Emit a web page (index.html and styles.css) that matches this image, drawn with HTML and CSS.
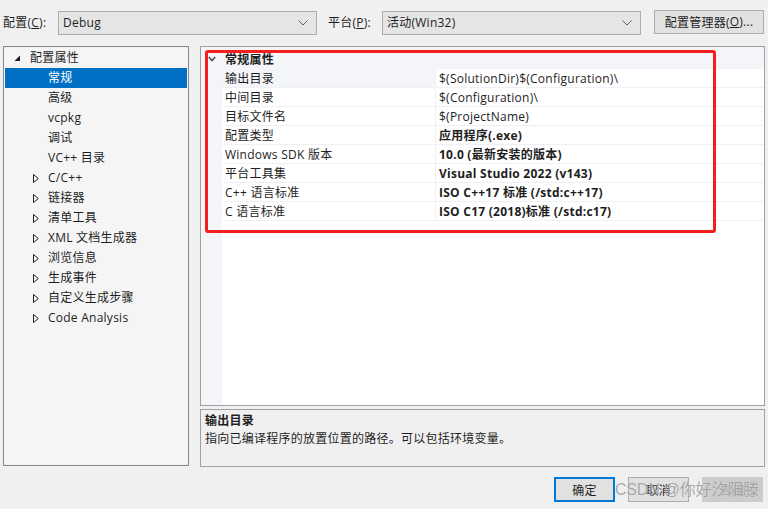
FILE: index.html
```html
<!DOCTYPE html>
<html lang="zh-CN">
<head>
<meta charset="utf-8">
<title>属性页</title>
<link rel="stylesheet" href="styles.css">
</head>
<body>
<div class="dialog">
  <div class="topbar">
    <span class="lbl lbl-config">配置(<u>C</u>):</span>
    <div class="combo combo-config"><span>Debug</span><svg class="caret" width="10" height="6" viewBox="0 0 10 6"><polyline points="0.5,0.5 5,5 9.5,0.5" fill="none" stroke="#606060" stroke-width="1"/></svg></div>
    <span class="lbl lbl-plat">平台(<u>P</u>):</span>
    <div class="combo combo-plat"><span>活动(Win32)</span><svg class="caret" width="10" height="6" viewBox="0 0 10 6"><polyline points="0.5,0.5 5,5 9.5,0.5" fill="none" stroke="#606060" stroke-width="1"/></svg></div>
    <div class="btn btn-mgr">配置管理器(<u>O</u>)...</div>
  </div>

  <div class="main">
    <div class="tree">
      <div class="trow lvl0"><svg class="tri" width="7" height="7" viewBox="0 0 7 7"><polygon points="6,0.5 6,6 0.5,6" fill="#1e1e1e"/></svg><span>配置属性</span></div>
      <div class="trow lvl1 sel"><span>常规</span></div>
      <div class="trow lvl1"><span>高级</span></div>
      <div class="trow lvl1"><span>vcpkg</span></div>
      <div class="trow lvl1"><span>调试</span></div>
      <div class="trow lvl1"><span>VC++ 目录</span></div>
      <div class="trow lvl1 col"><svg class="tri2" width="6" height="9" viewBox="0 0 6 9"><polygon points="0.5,0.5 5.3,4.5 0.5,8.5" fill="none" stroke="#1e1e1e" stroke-width="1"/></svg><span>C/C++</span></div>
      <div class="trow lvl1 col"><svg class="tri2" width="6" height="9" viewBox="0 0 6 9"><polygon points="0.5,0.5 5.3,4.5 0.5,8.5" fill="none" stroke="#1e1e1e" stroke-width="1"/></svg><span>链接器</span></div>
      <div class="trow lvl1 col"><svg class="tri2" width="6" height="9" viewBox="0 0 6 9"><polygon points="0.5,0.5 5.3,4.5 0.5,8.5" fill="none" stroke="#1e1e1e" stroke-width="1"/></svg><span>清单工具</span></div>
      <div class="trow lvl1 col"><svg class="tri2" width="6" height="9" viewBox="0 0 6 9"><polygon points="0.5,0.5 5.3,4.5 0.5,8.5" fill="none" stroke="#1e1e1e" stroke-width="1"/></svg><span>XML 文档生成器</span></div>
      <div class="trow lvl1 col"><svg class="tri2" width="6" height="9" viewBox="0 0 6 9"><polygon points="0.5,0.5 5.3,4.5 0.5,8.5" fill="none" stroke="#1e1e1e" stroke-width="1"/></svg><span>浏览信息</span></div>
      <div class="trow lvl1 col"><svg class="tri2" width="6" height="9" viewBox="0 0 6 9"><polygon points="0.5,0.5 5.3,4.5 0.5,8.5" fill="none" stroke="#1e1e1e" stroke-width="1"/></svg><span>生成事件</span></div>
      <div class="trow lvl1 col"><svg class="tri2" width="6" height="9" viewBox="0 0 6 9"><polygon points="0.5,0.5 5.3,4.5 0.5,8.5" fill="none" stroke="#1e1e1e" stroke-width="1"/></svg><span>自定义生成步骤</span></div>
      <div class="trow lvl1 col"><svg class="tri2" width="6" height="9" viewBox="0 0 6 9"><polygon points="0.5,0.5 5.3,4.5 0.5,8.5" fill="none" stroke="#1e1e1e" stroke-width="1"/></svg><span>Code Analysis</span></div>
    </div>

    <div class="right">
      <div class="grid">
        <div class="cat">
          <div class="gut"><svg width="8" height="6" viewBox="0 0 8 6"><polyline points="0.8,1 4,4.5 7.2,1" fill="none" stroke="#505050" stroke-width="1.6"/></svg></div>
          <div class="catname">常规属性</div>
        </div>
        <div class="prow cur"><div class="gut"></div><div class="pn">输出目录</div><div class="pv">$(SolutionDir)$(Configuration)\</div></div>
        <div class="prow"><div class="gut"></div><div class="pn">中间目录</div><div class="pv">$(Configuration)\</div></div>
        <div class="prow"><div class="gut"></div><div class="pn">目标文件名</div><div class="pv">$(ProjectName)</div></div>
        <div class="prow"><div class="gut"></div><div class="pn">配置类型</div><div class="pv b">应用程序(.exe)</div></div>
        <div class="prow"><div class="gut"></div><div class="pn">Windows SDK 版本</div><div class="pv b">10.0 (最新安装的版本)</div></div>
        <div class="prow"><div class="gut"></div><div class="pn">平台工具集</div><div class="pv b">Visual Studio 2022 (v143)</div></div>
        <div class="prow"><div class="gut"></div><div class="pn">C++ 语言标准</div><div class="pv b">ISO C++17 标准 (/std:c++17)</div></div>
        <div class="prow"><div class="gut"></div><div class="pn">C 语言标准</div><div class="pv b">ISO C17 (2018)标准 (/std:c17)</div></div>
        <div class="redbox"></div>
      </div>
      <div class="desc">
        <div class="dtitle">输出目录</div>
        <div class="dtext">指向已编译程序的放置位置的路径。可以包括环境变量。</div>
      </div>
    </div>
  </div>

  <div class="bottom">
    <div class="btn btn-ok">确定</div>
    <div class="btn btn-cancel">取消</div>
    <div class="btn btn-apply">应用</div>
    <div class="watermark">CSDN @你好汐阳滕</div>
  </div>
</div>
</body>
</html>
```

FILE: styles.css
```css
* { box-sizing: border-box; }
html, body { margin: 0; padding: 0; }
body {
  width: 768px;
  height: 509px;
  overflow: hidden;
  background: #f0f0f0;
  font-family: "Open Sans", "Noto Sans CJK SC", sans-serif;
  font-size: 12px;
  letter-spacing: 0.25px;
  color: #1e1e1e;
}
.dialog { position: relative; width: 768px; height: 509px; }
u { text-decoration: underline; text-underline-offset: 1px; }

.topbar {
  display: flex;
  align-items: center;
  height: 44px;
  padding-left: 3px;
  padding-top: 1px;
}
.lbl { line-height: 24px; white-space: nowrap; padding-top: 1px; }
.lbl-config { width: 55px; }
.lbl-plat { width: 54px; margin-left: 11px; }
.combo {
  width: 259px;
  height: 24px;
  background: #e5e5e5;
  border: 1px solid #adadad;
  display: flex;
  align-items: center;
  justify-content: space-between;
  padding: 0 8px 0 4px;
}
.combo span { line-height: 20px; padding-top: 1px; }
.caret { margin-top: 1px; }
.btn {
  height: 25px;
  background: #e1e1e1;
  border: 1px solid #adadad;
  display: flex;
  align-items: center;
  justify-content: center;
  white-space: nowrap;
}
.btn-mgr { width: 110px; margin-left: 13px; height: 24px; margin-top: -2px; }

.main {
  display: flex;
  margin-top: 2px;
  padding-left: 3px;
}
.tree {
  width: 186px;
  height: 420px;
  background: #f5f5f5;
  border: 1px solid #828790;
  padding-top: 1px;
}
.trow {
  height: 20px;
  display: flex;
  align-items: center;
  white-space: nowrap;
  margin: 0 1px;
}
.trow span { line-height: 20px; }
.lvl0 { padding-left: 9px; }
.lvl0 .tri { margin-right: 9px; }
.lvl1 { padding-left: 43px; }
.lvl1.col { padding-left: 28px; }
.tri2 { margin-right: 9px; }
.sel { background: #0070c4; color: #ffffff; }

.right {
  margin-left: 11px;
  width: 565px;
  display: flex;
  flex-direction: column;
  gap: 3px;
}
.grid {
  position: relative;
  height: 360px;
  background: #ffffff;
  border: 1px solid #a0a0a0;
  background-image: linear-gradient(#f3f5f9, #f3f5f9);
  background-size: 21px 100%;
  background-repeat: no-repeat;
}
.cat {
  display: flex;
  height: 22px;
  background: #f3f5f9;
  align-items: stretch;
}
.gut {
  width: 21px;
  flex: none;
  background: #f3f5f9;
  display: flex;
  align-items: center;
  justify-content: center;
}
.gut svg { margin-top: 2px; }
.catname { font-weight: bold; padding-left: 3px; padding-top: 3px; line-height: 19px; }
.prow {
  display: flex;
  height: 19px;
}
.pn, .pv {
  line-height: 20px;
  height: 19px;
  border-bottom: 1px solid #eef0f4;
  white-space: nowrap;
}
.pn {
  width: 214px;
  padding-left: 3px;
  border-right: 1px solid #eef0f4;
  background: #ffffff;
}
.cur .pn { background: #f3f5f9; }
.pv { flex: 1; padding-left: 3px; background: #ffffff; }
.b { font-weight: bold; }

.redbox {
  position: absolute;
  left: 4px;
  top: 3px;
  width: 511px;
  height: 183px;
  border: 3px solid #f41e1e;
  border-radius: 3px;
  pointer-events: none;
}

.desc {
  height: 58px;
  background: #f0f0f0;
  border: 1px solid #a0a0a0;
  padding: 2px 4px;
}
.dtitle { font-weight: bold; line-height: 18px; }
.dtext { line-height: 18px; }

.bottom {
  display: flex;
  margin-top: 10px;
  padding-left: 554px;
  gap: 13px;
  position: relative;
}
.btn-ok { width: 61px; border: 2px solid #0078d7; }
.btn-cancel { width: 61px; }
.btn-apply { width: 61px; background: #cccccc; border-color: #cccccc; color: #a8a8a8; }
.watermark {
  position: absolute;
  left: 615px;
  top: 0px;
  font-family: "Liberation Sans", "Noto Sans CJK SC", sans-serif;
  font-size: 16px;
  letter-spacing: -0.2px;
  line-height: 25px;
  color: rgba(140, 140, 140, 0.75);
  white-space: nowrap;
  text-shadow: 0 0 1px rgba(255,255,255,0.6);
  pointer-events: none;
}
```
